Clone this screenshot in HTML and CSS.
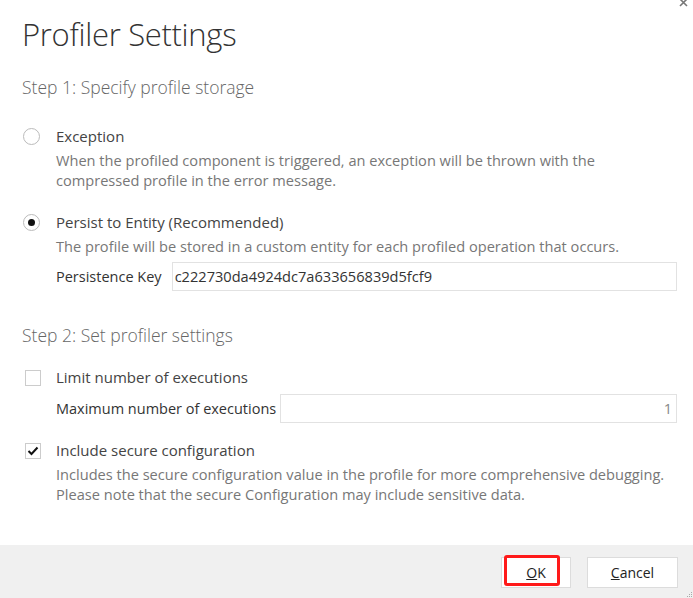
FILE: index.html
```html
<!DOCTYPE html>
<html>
<head>
<meta charset="utf-8">
<link rel="stylesheet" href="styles.css">
</head>
<body>
<div class="dialog">
  <span class="close" aria-label="Close">
    <svg width="9" height="9" viewBox="0 0 9 9"><path d="M1 0 L8 7 M8 0 L1 7" stroke="#777" stroke-width="1.6" fill="none"/></svg>
  </span>
  <div class="content">
    <h1 class="title">Profiler Settings</h1>
    <h2 class="step">Step 1: Specify profile storage</h2>

    <div class="option first">
      <span class="radio"></span>
      <div class="opt-body">
        <div class="opt-label">Exception</div>
        <div class="desc">When the profiled component is triggered, an exception will be thrown with the<br>compressed profile in the error message.</div>
      </div>
    </div>

    <div class="option second">
      <span class="radio checked"></span>
      <div class="opt-body">
        <div class="opt-label">Persist to Entity (Recommended)</div>
        <div class="desc">The profile will be stored in a custom entity for each profiled operation that occurs.</div>
        <div class="field">
          <span class="field-label">Persistence Key</span>
          <span class="input key">c222730da4924dc7a633656839d5fcf9</span>
        </div>
      </div>
    </div>

    <h2 class="step step2">Step 2: Set profiler settings</h2>

    <div class="option check-opt">
      <span class="check"></span>
      <div class="opt-body">
        <div class="opt-label">Limit number of executions</div>
        <div class="field field2">
          <span class="field-label">Maximum number of executions</span>
          <span class="input num">1</span>
        </div>
      </div>
    </div>

    <div class="option check-opt third">
      <span class="check checked">
        <svg width="12" height="10" viewBox="0 0 12 10"><path d="M1.5 5 L4.5 8 L10.5 1.5" stroke="#111" stroke-width="2" fill="none"/></svg>
      </span>
      <div class="opt-body">
        <div class="opt-label">Include secure configuration</div>
        <div class="desc">Includes the secure configuration value in the profile for more comprehensive debugging.<br>Please note that the secure Configuration may include sensitive data.</div>
      </div>
    </div>
  </div>
  <div class="footer">
    <span class="btn ok"><u>O</u>K</span>
    <span class="btn cancel"><u>C</u>ancel</span>
    <span class="highlight"></span>
    <svg class="grip" width="7" height="7" viewBox="0 0 7 7"><g fill="#aaa"><rect x="5" y="1" width="1" height="1"/><rect x="3" y="3" width="1" height="1"/><rect x="5" y="3" width="1" height="1"/><rect x="1" y="5" width="1" height="1"/><rect x="3" y="5" width="1" height="1"/><rect x="5" y="5" width="1" height="1"/></g></svg>
  </div>
</div>
</body>
</html>
```
FILE: styles.css
```css
html, body {
  margin: 0;
  padding: 0;
  background: #fff;
}
body {
  font-family: "Open Sans", "Noto Sans", sans-serif;
  color: #444;
}
.dialog {
  position: relative;
  width: 693px;
  height: 598px;
  display: flex;
  flex-direction: column;
  overflow: hidden;
}
.close {
  position: absolute;
  top: -1px;
  right: 5px;
  line-height: 0;
}
.content {
  flex: 1;
  padding: 0 16px 0 22px;
}
.title {
  margin: 13px 0 0 0;
  font-size: 31px;
  font-weight: 300;
  color: #333;
  line-height: 42px;
  letter-spacing: -0.3px;
}
.step {
  margin: 20px 0 0 0;
  font-size: 17.5px;
  font-weight: 300;
  color: #666;
  line-height: 24px;
}
.step2 {
  margin-top: 32px;
}
.option {
  display: flex;
  align-items: flex-start;
}
.option.first {
  margin-top: 25px;
}
.option.second {
  margin-top: 20px;
}
.option.check-opt {
  margin-top: 18px;
}
.option.third {
  margin-top: 15px;
}
.radio {
  flex: none;
  width: 15px;
  height: 15px;
  border: 1px solid #bbb;
  border-radius: 50%;
  margin: 4px 16px 0 1px;
  position: relative;
}
.radio.checked::after {
  content: "";
  position: absolute;
  left: 4px;
  top: 4px;
  width: 7px;
  height: 7px;
  border-radius: 50%;
  background: #111;
}
.check {
  flex: none;
  width: 14px;
  height: 14px;
  border: 1px solid #ccc;
  margin: 5px 15px 0 3px;
  display: flex;
  align-items: center;
  justify-content: center;
}
.opt-body {
  flex: 1;
}
.opt-label {
  font-size: 15px;
  line-height: 24px;
  color: #444;
}
.desc {
  font-size: 14.6px;
  line-height: 20px;
  color: #777;
  margin-top: 2px;
  white-space: nowrap;
}
.field {
  display: flex;
  align-items: center;
  margin-top: 6px;
}
.field2 {
  margin-top: 5px;
}
.field-label {
  font-size: 14.5px;
  color: #333;
  white-space: nowrap;
}
.input {
  flex: 1;
  height: 27px;
  border: 1px solid #e2e2e2;
  font-size: 14.6px;
  color: #333;
  line-height: 27px;
  box-sizing: content-box;
}
.key {
  margin-left: 10px;
  padding-left: 2px;
}
.num {
  margin-left: 4px;
  text-align: right;
  padding-right: 4px;
  color: #888;
}
.footer {
  position: relative;
  height: 53px;
  background: #f0f0f0;
  display: flex;
  justify-content: flex-end;
  align-items: flex-start;
  padding: 12px 15px 0 0;
  box-sizing: border-box;
  gap: 16px;
}
.btn {
  height: 29px;
  border: 1px solid #dcdcdc;
  background: #fff;
  font-size: 14px;
  color: #222;
  display: flex;
  align-items: center;
  justify-content: center;
}
.ok {
  width: 68px;
}
.cancel {
  width: 89px;
}
.highlight {
  position: absolute;
  left: 504px;
  top: 10px;
  width: 50px;
  height: 25px;
  border: 3px solid #ff1a1a;
  border-radius: 3px;
}
.grip {
  position: absolute;
  right: 0;
  bottom: 0;
}
```
